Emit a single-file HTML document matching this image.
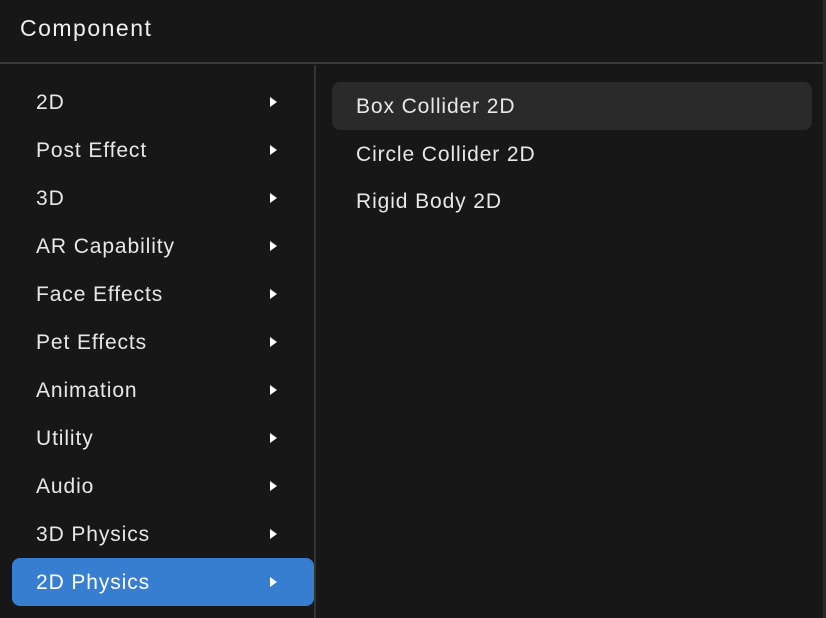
<!DOCTYPE html>
<html><head><meta charset="utf-8"><style>
*{margin:0;padding:0;box-sizing:border-box}
html,body{width:826px;height:618px;background:#171717;overflow:hidden;font-family:"Liberation Sans",sans-serif;color:#e8e8e8}
.hdr{position:absolute;left:0;top:0;width:826px;height:64px;border-bottom:2px solid #3a3a3a;}
.hdr span{position:absolute;left:20px;top:15px;font-size:23px;letter-spacing:1.5px;color:#f0f0f0}
.vline{position:absolute;left:314px;top:65px;width:2px;height:553px;background:#333}
.rline{position:absolute;left:823px;top:0;width:3px;height:618px;background:#2a2a2a}
.item{position:absolute;height:48px;font-size:21px;letter-spacing:0.9px;line-height:50px}
.l{left:12px;width:302px;padding-left:24px}
.r{left:332px;width:480px;padding-left:24px}
.sel{background:#377ed0;border-radius:8px;color:#fff}
.hov{background:#2a2a2a;border-radius:8px}
.arr{position:absolute;left:258px;top:19px;width:0;height:0;border-top:5px solid transparent;border-bottom:5px solid transparent;border-left:7px solid #fff}
</style></head><body>
<div class="hdr"><span>Component</span></div>
<div class="vline"></div>
<div class="rline"></div>
<div class="item l" style="top:78px">2D<i class="arr"></i></div>
<div class="item l" style="top:126px">Post Effect<i class="arr"></i></div>
<div class="item l" style="top:174px">3D<i class="arr"></i></div>
<div class="item l" style="top:222px">AR Capability<i class="arr"></i></div>
<div class="item l" style="top:270px">Face Effects<i class="arr"></i></div>
<div class="item l" style="top:318px">Pet Effects<i class="arr"></i></div>
<div class="item l" style="top:366px">Animation<i class="arr"></i></div>
<div class="item l" style="top:414px">Utility<i class="arr"></i></div>
<div class="item l" style="top:462px">Audio<i class="arr"></i></div>
<div class="item l" style="top:510px">3D Physics<i class="arr"></i></div>
<div class="item l sel" style="top:558px">2D Physics<i class="arr"></i></div>
<div class="item r hov" style="top:82px">Box Collider 2D</div>
<div class="item r" style="top:130px">Circle Collider 2D</div>
<div class="item r" style="top:177px">Rigid Body 2D</div>
</body></html>
